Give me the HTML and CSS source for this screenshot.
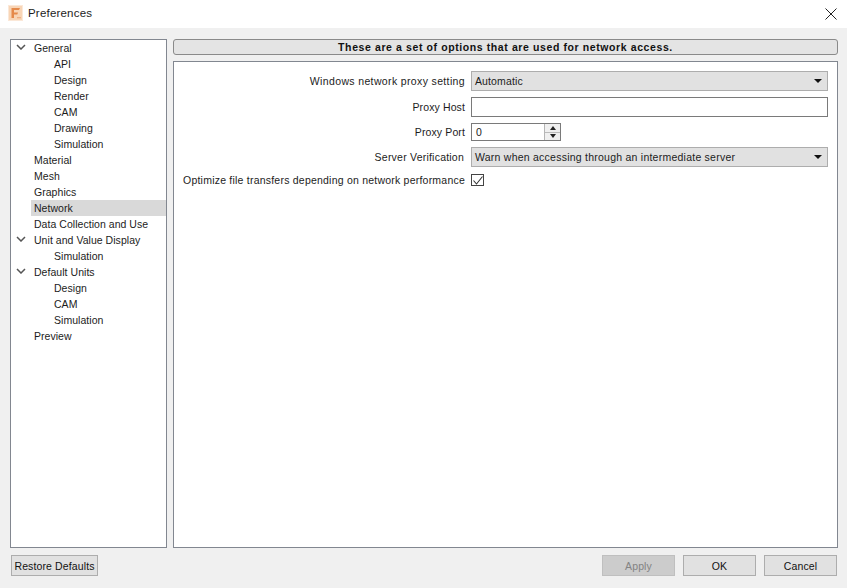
FILE: index.html
```html
<!DOCTYPE html>
<html lang="en">
<head>
<meta charset="utf-8">
<title>Preferences</title>
<link rel="stylesheet" href="styles.css">
</head>
<body>
<div class="dialog">
  <header class="titlebar">
    <svg class="app-icon" width="16" height="16" viewBox="0 0 16 16">
      <rect x="0" y="0" width="15" height="16" fill="#fbe8d8"/>
      <rect x="1" y="1" width="13" height="14" fill="#f8d5b6"/>
      <path d="M3.5 3h8.5l-1 2H6v2.5h4l-.7 2H6V13H3.500z" fill="#e58a4b"/>
      <rect x="9" y="12" width="4" height="1.300" fill="#eeb083"/>
    </svg>
    <span class="title">Preferences</span>
    <svg class="close" width="12" height="12" viewBox="0 0 12 12">
      <path d="M.5.5l11 11M11.5.5l-11 11" stroke="#222" stroke-width="1" fill="none"/>
    </svg>
  </header>
  <main class="content">
    <nav class="tree">
      <div class="node"><svg class="chev" width="10" height="6" viewBox="0 0 10 6"><path d="M1 1l4 4 4-4" stroke="#555" stroke-width="1.5" fill="none"/></svg>General</div>
      <div class="node child">API</div>
      <div class="node child">Design</div>
      <div class="node child">Render</div>
      <div class="node child">CAM</div>
      <div class="node child">Drawing</div>
      <div class="node child">Simulation</div>
      <div class="node">Material</div>
      <div class="node">Mesh</div>
      <div class="node">Graphics</div>
      <div class="node selected">Network</div>
      <div class="node">Data Collection and Use</div>
      <div class="node"><svg class="chev" width="10" height="6" viewBox="0 0 10 6"><path d="M1 1l4 4 4-4" stroke="#555" stroke-width="1.5" fill="none"/></svg>Unit and Value Display</div>
      <div class="node child">Simulation</div>
      <div class="node"><svg class="chev" width="10" height="6" viewBox="0 0 10 6"><path d="M1 1l4 4 4-4" stroke="#555" stroke-width="1.5" fill="none"/></svg>Default Units</div>
      <div class="node child">Design</div>
      <div class="node child">CAM</div>
      <div class="node child">Simulation</div>
      <div class="node">Preview</div>
    </nav>
    <section class="detail">
      <div class="banner">These are a set of options that are used for network access.</div>
      <div class="panel">
        <div class="form">
          <label class="lbl loose">Windows network proxy setting</label>
          <div class="select"><span class="tight">Automatic</span><i class="caret"></i></div>
          <label class="lbl tight">Proxy Host</label>
          <div class="input"></div>
          <label class="lbl tight">Proxy Port</label>
          <div class="spin">
            <span class="spin-val">0</span>
            <span class="spin-btns">
              <span class="spin-btn"><i class="up"></i></span>
              <span class="spin-btn"><i class="down"></i></span>
            </span>
          </div>
          <label class="lbl server">Server Verification</label>
          <div class="select"><span class="warn">Warn when accessing through an intermediate server</span><i class="caret"></i></div>
          <label class="lbl">Optimize file transfers depending on network performance</label>
          <div class="check">
            <svg width="12" height="11" viewBox="0 0 12 11"><path d="M1.500 5.500l3 3.500L10.500 1.500" stroke="#333" stroke-width="1.100" fill="none"/></svg>
          </div>
        </div>
      </div>
    </section>
  </main>
  <footer class="actions">
    <button class="btn restore">Restore Defaults</button>
    <span class="spacer"></span>
    <button class="btn wide disabled">Apply</button>
    <button class="btn wide">OK</button>
    <button class="btn wide">Cancel</button>
  </footer>
</div>
</body>
</html>
```
FILE: styles.css
```css
* { box-sizing: border-box; }
html, body { margin: 0; height: 100%; }
body {
  font-family: "Liberation Sans", Arial, sans-serif;
  font-size: 10.5px;
  letter-spacing: 0.22px;
  color: #1c1c1c;
  background: #f0f0f0;
  overflow: hidden;
}
.dialog { width: 847px; height: 588px; display: flex; flex-direction: column; }
.titlebar {
  height: 28px; background: #fff; display: flex; align-items: center;
  padding: 0 8px 2px 8px; flex: none;
}
.app-icon { margin-right: 4px; }
.title { font-size: 11.5px; flex: 1; letter-spacing: 0.2px; }
.close { margin-right: 2px; margin-top: 2px; }
.content {
  height: 520px; flex: none; display: flex; gap: 6px;
  padding: 11px 9px 0 10px;
}
.tree {
  width: 157px; height: 509px; background: #fff; border: 1px solid #828790;
  padding: 0; flex: none; letter-spacing: 0.04px;
}
.node { height: 16px; line-height: 16px; padding-left: 23px; position: relative; white-space: nowrap; }
.child { padding-left: 43px; }
.selected { background: #d9d9d9; margin-left: 20px; padding-left: 3px; }
.chev { position: absolute; left: 5px; top: 4px; }
.detail { flex: 1; display: flex; flex-direction: column; gap: 6px; min-width: 0; }
.banner {
  height: 16px; background: #e4e4e4; border: 1px solid #8a8a8a; border-radius: 3px;
  text-align: center; font-weight: bold; line-height: 14px; letter-spacing: 0.6px;
  color: #111; flex: none;
}
.panel { height: 487px; background: #fff; border: 1px solid #828790; padding: 9px 9px 0 9px; flex: none; }
.form {
  display: grid; grid-template-columns: 282px 1fr; column-gap: 6px;
  grid-template-rows: 20px 20px 18px 20px 14px; row-gap: 6px; align-items: center;
}
.lbl { text-align: right; white-space: nowrap; }
.loose { letter-spacing: 0.36px; }
.tight { letter-spacing: 0.12px; }
.warn { letter-spacing: 0.24px; }
.server { padding-right: 1px; }
.select {
  height: 20px; background: #e1e1e1; border: 1px solid #adadad; display: flex;
  align-items: center; justify-content: space-between; padding: 0 5px 0 3px;
}
.caret {
  width: 0; height: 0; border-left: 4px solid transparent; border-right: 4px solid transparent;
  border-top: 4px solid #111;
}
.input { height: 20px; background: #fff; border: 1px solid #7a7a7a; }
.spin {
  width: 90px; height: 18px; background: #fff; border: 1px solid #7a7a7a;
  display: flex; justify-content: space-between; padding-left: 4px; align-items: center;
}
.spin-btns { width: 16px; height: 16px; display: flex; flex-direction: column; border-left: 1px solid #b5b5b5; }
.spin-btn { flex: 1; background: #f0f0f0; border-bottom: 1px solid #bbb; display: flex; align-items: center; justify-content: center; }
.spin-btn:last-child { border-bottom: 0; }
.up { width: 0; height: 0; border-left: 3px solid transparent; border-right: 3px solid transparent; border-bottom: 4px solid #222; }
.down { width: 0; height: 0; border-left: 3px solid transparent; border-right: 3px solid transparent; border-top: 4px solid #222; }
.check {
  width: 13px; height: 12px; border: 1px solid #444; background: #fff; display: flex;
  align-items: center; justify-content: center;
}
.check svg { flex: none; }
.actions {
  height: 21px; display: flex; gap: 8px; margin-top: 7px; padding: 0 10px 0 11px; flex: none;
}
.spacer { flex: 1; }
.btn {
  font: inherit; letter-spacing: 0.12px; color: #111; height: 21px; background: #e1e1e1;
  border: 1px solid #adadad; padding: 0; border-radius: 0;
}
.restore { width: 87px; }
.wide { width: 73px; }
.disabled { background: #cccccc; color: #838383; border-color: #bfbfbf; }
```
